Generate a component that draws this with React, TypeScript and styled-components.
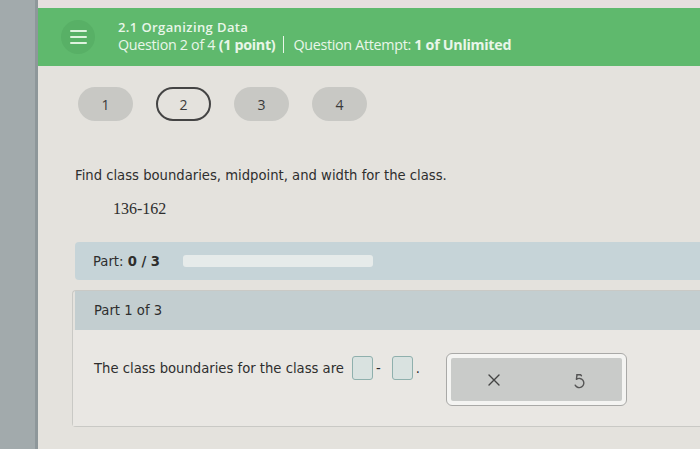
import styled, { createGlobalStyle } from "styled-components";

const GlobalStyle = createGlobalStyle`
  html, body {
    margin: 0;
    padding: 0;
    background: #e4e2dd;
    overflow: hidden;
  }
`;

const pages = [1, 2, 3, 4];

function UndoIcon() {
  return (
    <svg width="16" height="18" viewBox="0 0 16 18" fill="none" stroke="#555" strokeWidth="1.4" strokeLinecap="round" strokeLinejoin="round">
      <path d="M6 3.8 L5.4 8.4 A4.6 4.6 0 1 1 4.2 14.2" />
      <path d="M6 3.8 H9.6 L10.4 4.8" />
    </svg>
  );
}

function CloseIcon() {
  return (
    <svg width="14" height="14" viewBox="0 0 14 14" stroke="#444" strokeWidth="1.4" strokeLinecap="round">
      <path d="M2 2 L12 12 M12 2 L2 12" />
    </svg>
  );
}

function App() {
  return (
    <>
      <GlobalStyle />
      <Screen>
        <SideStrip />
        <Main>
          <TopStrip />
          <Header>
            <MenuButton aria-label="menu">
              <MenuLine />
              <MenuLine />
              <MenuLine />
            </MenuButton>
            <HeaderText>
              <Topic>2.1 Organizing Data</Topic>
              <Meta>
                Question 2 of 4 <b>(1 point)</b>
                <Divider />
                Question Attempt: <b>1 of Unlimited</b>
              </Meta>
            </HeaderText>
          </Header>
          <Content>
            <Pills>
              {pages.map((n) => (
                <Pill key={n} $active={n === 2}>
                  {n}
                </Pill>
              ))}
            </Pills>
            <Prompt>Find class boundaries, midpoint, and width for the class.</Prompt>
            <ClassRange>136-162</ClassRange>
            <ProgressBar>
              <span>
                Part: <b>0 / 3</b>
              </span>
              <Track />
            </ProgressBar>
            <PartCard>
              <PartHeader>Part 1 of 3</PartHeader>
              <PartBody>
                <Sentence>
                  The class boundaries for the class are
                  <AnswerBox />
                  <Dash>-</Dash>
                  <AnswerBox />
                  <Dot>.</Dot>
                </Sentence>
                <ToolFrame>
                  <ToolPanel>
                    <ToolButton aria-label="clear">
                      <CloseIcon />
                    </ToolButton>
                    <ToolButton aria-label="undo">
                      <UndoIcon />
                    </ToolButton>
                  </ToolPanel>
                </ToolFrame>
              </PartBody>
            </PartCard>
          </Content>
        </Main>
      </Screen>
    </>
  );
}

export default App;

const Screen = styled.div`
  display: flex;
  width: 700px;
  height: 449px;
  overflow: hidden;
`;

const SideStrip = styled.div`
  width: 35px;
  flex-shrink: 0;
  background: #a2aaac;
  border-right: 3px solid #8e979a;
`;

const Main = styled.div`
  flex: 1;
  display: flex;
  flex-direction: column;
  min-width: 0;
`;

const TopStrip = styled.div`
  height: 8px;
  background: #e6dfde;
`;

const Header = styled.header`
  height: 58px;
  display: flex;
  align-items: center;
  padding-left: 23px;
  gap: 23px;
  background: #5fb96d;
`;

const MenuButton = styled.div`
  width: 34px;
  height: 34px;
  border-radius: 50%;
  background: #58b066;
  display: flex;
  flex-direction: column;
  align-items: center;
  justify-content: center;
  gap: 4px;
`;

const MenuLine = styled.span`
  width: 17px;
  height: 2px;
  border-radius: 1px;
  background: #dff3df;
`;

const HeaderText = styled.div`
  display: flex;
  flex-direction: column;
  color: #e9f6e9;
  font-family: "Open Sans", "Lato", sans-serif;
  margin-top: -2px;
`;

const Topic = styled.div`
  font-size: 13px;
  font-weight: 600;
  letter-spacing: 0.4px;
  line-height: 17px;
`;

const Meta = styled.div`
  font-size: 14.3px;
  line-height: 18px;
  display: flex;
  align-items: center;
  white-space: pre;
  letter-spacing: -0.3px;

  b {
    font-weight: 700;
  }
`;

const Divider = styled.span`
  width: 1px;
  height: 17px;
  background: #e9f6e9;
  margin: 0 9px 0 8px;
`;

const Content = styled.div`
  flex: 1;
  display: flex;
  flex-direction: column;
  padding-left: 37px;
  font-family: "DejaVu Sans", Verdana, sans-serif;
  color: #2e2e2e;
`;

const Pills = styled.div`
  display: flex;
  gap: 23px;
  margin: 21px 0 0 3px;
`;

const Pill = styled.div<{ $active?: boolean }>`
  width: 55px;
  height: 34px;
  box-sizing: border-box;
  border-radius: 17px;
  display: flex;
  align-items: center;
  justify-content: center;
  font-family: "Open Sans", sans-serif;
  font-size: 14px;
  color: #3a3a3a;
  background: ${(p) => (p.$active ? "transparent" : "#c8c8c4")};
  border: ${(p) => (p.$active ? "2px solid #444" : "none")};
`;

const Prompt = styled.div`
  margin-top: 46px;
  font-size: 13.2px;
  line-height: 17px;
`;

const ClassRange = styled.div`
  margin: 15px 0 0 38px;
  font-family: "Liberation Serif", serif;
  font-size: 16px;
  line-height: 20px;
`;

const ProgressBar = styled.div`
  margin-top: 23px;
  height: 38px;
  display: flex;
  align-items: center;
  gap: 23px;
  padding-left: 18px;
  background: #c6d4d8;
  border-radius: 4px 0 0 4px;
  font-size: 13.2px;

  b {
    font-weight: 700;
  }
`;

const Track = styled.div`
  width: 190px;
  height: 12px;
  border-radius: 3px;
  background: #e6ebea;
`;

const PartCard = styled.div`
  margin: 10px 0 0 -3px;
  display: flex;
  flex-direction: column;
  border: 1px solid #c9c9c5;
  border-right: none;
  border-radius: 4px 0 0 4px;
`;

const PartHeader = styled.div`
  height: 39px;
  display: flex;
  align-items: center;
  padding-left: 19px;
  margin-left: 2px;
  background: #c3ced0;
  font-size: 13.2px;
`;

const PartBody = styled.div`
  height: 96px;
  display: flex;
  align-items: flex-start;
  padding: 23px 0 0 21px;
  box-sizing: border-box;
  background: #e9e7e3;
`;

const Sentence = styled.div`
  display: flex;
  align-items: center;
  font-size: 13.2px;
  margin-top: 3px;
`;

const AnswerBox = styled.span`
  width: 21px;
  height: 24px;
  box-sizing: border-box;
  border: 1px solid #8fb0ad;
  border-radius: 3px;
  background: #d9e2e0;
  margin-left: 8px;
`;

const Dash = styled.span`
  margin: 0 3px;
`;

const Dot = styled.span`
  margin-left: 3px;
`;

const ToolFrame = styled.div`
  margin-left: 26px;
  padding: 4px;
  border: 1px solid #a9a9a7;
  border-radius: 6px;
  background: #f4f4f2;
`;

const ToolPanel = styled.div`
  width: 171px;
  height: 43px;
  display: flex;
  align-items: center;
  justify-content: space-around;
  background: #c9cbc9;
  border-radius: 2px;
`;

const ToolButton = styled.div`
  display: flex;
  align-items: center;
  justify-content: center;
  width: 40px;
  height: 30px;
`;
